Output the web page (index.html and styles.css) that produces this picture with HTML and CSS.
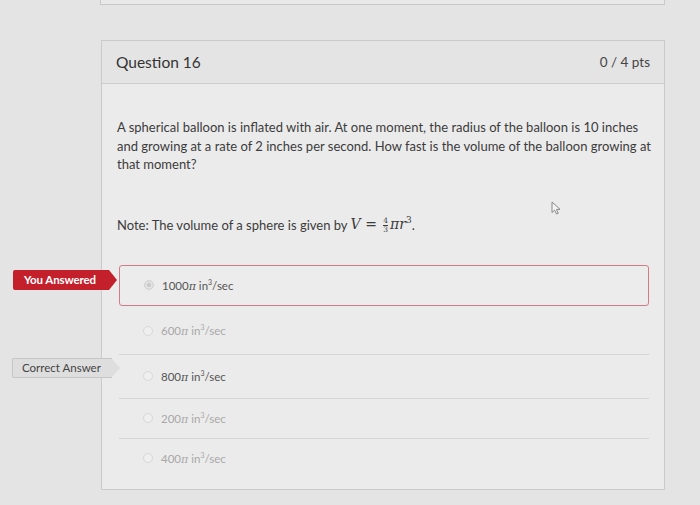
FILE: index.html
```html
<!DOCTYPE html>
<html>
<head>
<meta charset="utf-8">
<link rel="stylesheet" href="styles.css">
</head>
<body>
<div class="page">
  <div class="prev-card"></div>
  <div class="card">
    <div class="card-header">
      <span class="title">Question 16</span>
      <span class="pts">0 / 4 pts</span>
    </div>
    <div class="card-body">
      <p class="question">A spherical balloon is inflated with air. At one moment, the radius of the balloon is 10 inches and growing at a rate of 2 inches per second. How fast is the volume of the balloon growing at that moment?</p>
      <p class="note">Note: The volume of a sphere is given by <span class="math"><i>V</i> = <span class="frac"><span class="num">4</span><span class="den">3</span></span><i>πr</i><sup>3</sup></span>.
        <svg class="cursor" width="11" height="14" viewBox="0 0 11 14"><path d="M1 1 L1 11.5 L3.6 9.2 L5.6 13 L7.3 12.2 L5.4 8.5 L9 8.3 Z" fill="#f4f4f4" stroke="#888" stroke-width="1" stroke-linejoin="round"/></svg>
      </p>
      <div class="answers">
        <div class="answer selected">
          <span class="flag flag-wrong">You Answered</span>
          <span class="radio checked"></span>
          <span class="ans-text dark">1000<i>π</i> in<sup>3</sup>/sec</span>
        </div>
        <div class="answer tall">
          <span class="radio"></span>
          <span class="ans-text">600<i>π</i> in<sup>3</sup>/sec</span>
        </div>
        <div class="answer mid divided">
          <span class="flag flag-correct">Correct Answer</span>
          <span class="radio"></span>
          <span class="ans-text dark">800<i>π</i> in<sup>3</sup>/sec</span>
        </div>
        <div class="answer divided">
          <span class="radio"></span>
          <span class="ans-text">200<i>π</i> in<sup>3</sup>/sec</span>
        </div>
        <div class="answer divided">
          <span class="radio"></span>
          <span class="ans-text">400<i>π</i> in<sup>3</sup>/sec</span>
        </div>
      </div>
    </div>
  </div>
</div>
</body>
</html>
```

FILE: styles.css
```css
html, body {
  margin: 0;
  padding: 0;
}
body {
  background: #e4e4e4;
  font-family: Lato, "Open Sans", "Liberation Sans", sans-serif;
  color: #3a3a3a;
  width: 700px;
  height: 505px;
  overflow: hidden;
}
.page {
  padding-left: 101px;
  width: 564px;
}
.prev-card {
  height: 4px;
  border: 1px solid #c9c9c9;
  border-top: none;
  background: #e9e9e9;
  margin-left: -1px;
}
.card {
  margin-top: 35px;
  border: 1px solid #cacaca;
  background: #ebebeb;
  height: 450px;
  box-sizing: border-box;
}
.card-header {
  height: 43px;
  box-sizing: border-box;
  border-bottom: 1px solid #cdcdcd;
  background: #e4e4e4;
  display: flex;
  align-items: center;
  justify-content: space-between;
  padding: 0 14px 1px 14px;
}
.title {
  font-size: 15.5px;
  color: #333;
}
.pts {
  font-size: 13.5px;
  color: #444;
}
.card-body {
  padding: 34px 0 0 0;
}
.question {
  margin: 0 12px 0 15px;
  font-size: 13px;
  line-height: 18.5px;
  color: #3c3c3c;
}
.note {
  position: relative;
  margin: 38px 14px 0 15px;
  font-size: 13px;
  line-height: 18px;
  color: #3c3c3c;
}
.math {
  font-family: "DejaVu Serif", "Liberation Serif", serif;
  font-size: 14px;
}
.math i {
  font-style: italic;
}
.math sup {
  font-size: 9px;
}
.frac {
  display: inline-flex;
  flex-direction: column;
  vertical-align: middle;
  font-size: 7.5px;
  line-height: 7.5px;
  margin: 0 2px;
  text-align: center;
}
.frac .num {
  border-bottom: 1px solid #3c3c3c;
  padding-bottom: 1px;
}
.cursor {
  position: absolute;
  left: 434px;
  top: -11px;
}
.answers {
  margin: 31px 15px 0 17px;
}
.answer {
  position: relative;
  display: flex;
  align-items: center;
  height: 41px;
  box-sizing: border-box;
  padding-left: 24px;
}
.answer.selected {
  border: 1.5px solid #d27a86;
  border-radius: 3px;
  background: #ececec;
}
.answer.tall {
  height: 48px;
  padding-top: 2px;
}
.answer.divided {
  border-top: 1px solid #d6d6d6;
  height: 40px;
}
.answer.mid.divided {
  height: 44px;
}
.radio {
  width: 8px;
  height: 8px;
  border-radius: 50%;
  border: 1px solid #d8d8d8;
  background: #efefef;
  margin-right: 8px;
  flex: none;
}
.radio.checked {
  background: #c8c8c8;
  border-color: #d4d4d4;
  box-shadow: inset 0 0 0 2px #e2e2e2;
}
.ans-text {
  font-family: Lato, "Liberation Sans", sans-serif;
  font-size: 11.5px;
  color: #a8a8a8;
}
.ans-text.dark {
  color: #555;
}
.ans-text i {
  font-family: "DejaVu Serif", "Liberation Serif", serif;
  font-size: 11px;
}
.ans-text sup {
  font-size: 7px;
}
.flag {
  position: absolute;
  left: -107px;
  height: 20px;
  display: flex;
  align-items: center;
  font-size: 11.5px;
  padding-left: 11px;
  box-sizing: border-box;
  border-radius: 2px 0 0 2px;
}
.flag-wrong {
  top: 4px;
  width: 96px;
  background: #c4202b;
  color: #fff;
  font-weight: bold;
  letter-spacing: -0.1px;
}
.flag-wrong::after {
  content: "";
  position: absolute;
  right: -8px;
  top: 0;
  border-left: 8px solid #c4202b;
  border-top: 10px solid transparent;
  border-bottom: 10px solid transparent;
}
.flag-correct {
  top: 3px;
  width: 100px;
  background: #dedede;
  border: 1px solid #c6c6c6;
  border-right: none;
  color: #444;
  padding-left: 9px;
}
.flag-correct::after {
  content: "";
  position: absolute;
  right: -8px;
  top: 0;
  border-left: 8px solid #dedede;
  border-top: 9px solid transparent;
  border-bottom: 9px solid transparent;
}
```
